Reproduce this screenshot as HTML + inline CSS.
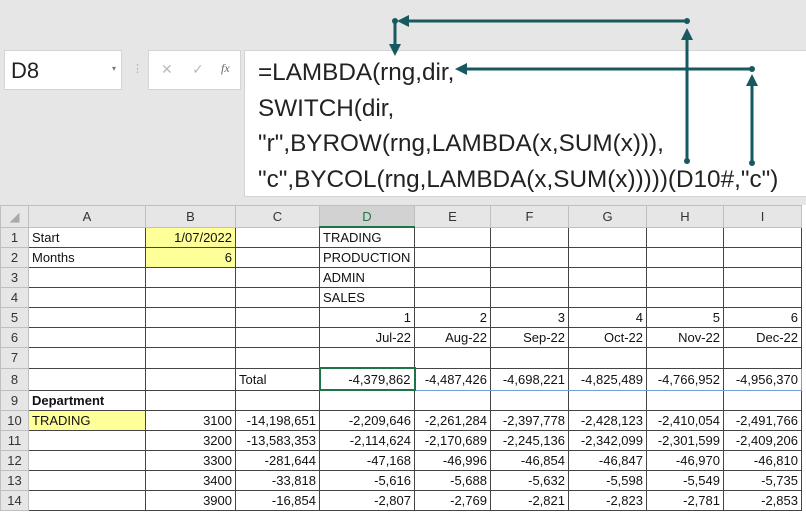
<!DOCTYPE html>
<html><head><meta charset="utf-8"><style>
body{margin:0;width:806px;height:516px;overflow:hidden;background:#fff;font-family:"Liberation Sans",Arial,sans-serif;position:relative}
#top{position:absolute;left:0;top:0;width:806px;height:205px;background:#e6e6e6}
.box{position:absolute;background:#fff;border:1px solid #d4d4d4}
#ftext{position:absolute;left:258px;top:55px;font-size:24px;line-height:35.7px;color:#222;white-space:nowrap;transform:scaleX(1.012);transform-origin:0 0}
table{position:absolute;left:0;top:205px;border-collapse:collapse;table-layout:fixed;font-size:13px;color:#111}
td{border:1px solid #444;height:19px;padding:0 3px;white-space:nowrap;overflow:hidden;line-height:19px}
td.r{text-align:right}
tr.h td{background:#e6e6e6;border-color:#bfbfbf;text-align:center;height:20px;color:#333}
td.rh{background:#e6e6e6;border-color:#bfbfbf;text-align:center;color:#333;padding:0}
.y{background:#ffff99}
</style></head><body>
<div id="top"></div>
<div class="box" style="left:4px;top:50px;width:116px;height:38px"><span style="position:absolute;left:6px;top:7px;font-size:22px;color:#222">D8</span><span style="position:absolute;left:107px;top:13px;font-size:8px;color:#777">▾</span></div>
<div style="position:absolute;left:132px;top:62px;font-size:11px;color:#aaa">⋮</div>
<div class="box" style="left:148px;top:50px;width:91px;height:38px;color:#bbb;font-size:14px"><span style="position:absolute;left:12px;top:10px">✕</span><span style="position:absolute;left:43px;top:10px">✓</span><span style="position:absolute;left:72px;top:10px;font-style:italic;font-family:'Liberation Serif',serif;color:#666;font-size:12px">fx</span></div>
<div class="box" style="left:244px;top:50px;width:562px;height:145px;border-right:none"></div>
<div id="ftext">=LAMBDA(rng,dir,<br>SWITCH(dir,<br>"r",BYROW(rng,LAMBDA(x,SUM(x))),<br>"c",BYCOL(rng,LAMBDA(x,SUM(x)))))(D10#,"c")</div>
<svg style="position:absolute;left:0;top:0" width="806" height="200">
<g stroke="#17595e" stroke-width="3" fill="#17595e">
<line x1="687" y1="21" x2="405" y2="21"/><polygon points="397,21 409,15 409,27" stroke="none"/>
<circle cx="395" cy="21" r="3" stroke="none"/><circle cx="687" cy="21" r="3" stroke="none"/>
<line x1="395" y1="21" x2="395" y2="46"/><polygon points="395,56 389,44 401,44" stroke="none"/>
<line x1="687" y1="36" x2="687" y2="161"/><polygon points="687,28 681,40 693,40" stroke="none"/><circle cx="687" cy="161" r="3" stroke="none"/>
<line x1="752" y1="69" x2="464" y2="69"/><polygon points="455,69 467,63 467,75" stroke="none"/><circle cx="752" cy="69" r="3" stroke="none"/>
<line x1="752" y1="84" x2="752" y2="163"/><polygon points="752,74 746,86 758,86" stroke="none"/><circle cx="752" cy="163" r="3" stroke="none"/>
</g></svg>
<table>
<colgroup><col style="width:28px"><col style="width:117px"><col style="width:90px"><col style="width:84px"><col style="width:95px"><col style="width:76px"><col style="width:78px"><col style="width:78px"><col style="width:77px"><col style="width:78px"></colgroup>
<tr class="h"><td style="color:#aaa">◢</td><td>A</td><td>B</td><td>C</td><td style="background:#d2d2d2;border-bottom:2px solid #217346;color:#217346">D</td><td>E</td><td>F</td><td>G</td><td>H</td><td>I</td></tr>
<tr><td class="rh">1</td><td>Start</td><td class="r y">1/07/2022</td><td></td><td>TRADING</td><td></td><td></td><td></td><td></td><td></td></tr>
<tr><td class="rh">2</td><td>Months</td><td class="r y">6</td><td></td><td>PRODUCTION</td><td></td><td></td><td></td><td></td><td></td></tr>
<tr><td class="rh">3</td><td></td><td></td><td></td><td>ADMIN</td><td></td><td></td><td></td><td></td><td></td></tr>
<tr><td class="rh">4</td><td></td><td></td><td></td><td>SALES</td><td></td><td></td><td></td><td></td><td></td></tr>
<tr><td class="rh">5</td><td></td><td></td><td></td><td class="r">1</td><td class="r">2</td><td class="r">3</td><td class="r">4</td><td class="r">5</td><td class="r">6</td></tr>
<tr><td class="rh">6</td><td></td><td></td><td></td><td class="r">Jul-22</td><td class="r">Aug-22</td><td class="r">Sep-22</td><td class="r">Oct-22</td><td class="r">Nov-22</td><td class="r">Dec-22</td></tr>
<tr><td class="rh">7</td><td></td><td></td><td></td><td></td><td></td><td></td><td></td><td></td><td></td></tr>
<tr style="height:22px"><td class="rh">8</td><td></td><td></td><td>Total</td><td class="r" style="border:2px solid #217346">-4,379,862</td><td class="r" style="border-top:1px solid #7a9fd8;border-bottom:1px solid #7a9fd8">-4,487,426</td><td class="r" style="border-top:1px solid #7a9fd8;border-bottom:1px solid #7a9fd8">-4,698,221</td><td class="r" style="border-top:1px solid #7a9fd8;border-bottom:1px solid #7a9fd8">-4,825,489</td><td class="r" style="border-top:1px solid #7a9fd8;border-bottom:1px solid #7a9fd8">-4,766,952</td><td class="r" style="border:1px solid #7a9fd8">-4,956,370</td></tr>
<tr><td class="rh">9</td><td><b>Department</b></td><td></td><td></td><td></td><td></td><td></td><td></td><td></td><td></td></tr>
<tr><td class="rh">10</td><td class="y">TRADING</td><td class="r">3100</td><td class="r">-14,198,651</td><td class="r">-2,209,646</td><td class="r">-2,261,284</td><td class="r">-2,397,778</td><td class="r">-2,428,123</td><td class="r">-2,410,054</td><td class="r">-2,491,766</td></tr>
<tr><td class="rh">11</td><td></td><td class="r">3200</td><td class="r">-13,583,353</td><td class="r">-2,114,624</td><td class="r">-2,170,689</td><td class="r">-2,245,136</td><td class="r">-2,342,099</td><td class="r">-2,301,599</td><td class="r">-2,409,206</td></tr>
<tr><td class="rh">12</td><td></td><td class="r">3300</td><td class="r">-281,644</td><td class="r">-47,168</td><td class="r">-46,996</td><td class="r">-46,854</td><td class="r">-46,847</td><td class="r">-46,970</td><td class="r">-46,810</td></tr>
<tr><td class="rh">13</td><td></td><td class="r">3400</td><td class="r">-33,818</td><td class="r">-5,616</td><td class="r">-5,688</td><td class="r">-5,632</td><td class="r">-5,598</td><td class="r">-5,549</td><td class="r">-5,735</td></tr>
<tr><td class="rh">14</td><td></td><td class="r">3900</td><td class="r">-16,854</td><td class="r">-2,807</td><td class="r">-2,769</td><td class="r">-2,821</td><td class="r">-2,823</td><td class="r">-2,781</td><td class="r">-2,853</td></tr>
</table>
</body></html>
